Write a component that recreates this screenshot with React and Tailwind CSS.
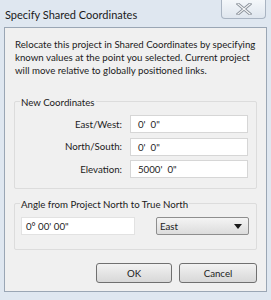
import React from "react";

export default function App() {
  const font = { fontFamily: 'Lato, "Open Sans", sans-serif' };
  return (
    <div
      className="w-[271px] h-[300px] bg-[#dfe7f0] relative overflow-hidden text-[#1b1b1b]"
      style={font}
    >
      {/* title bar */}
      <div className="h-[27px] flex items-start pl-[5px] pt-[8px] text-[11px] leading-[14px] text-[#1a1a1a]">
        Specify Shared Coordinates
      </div>
      <div className="absolute top-0 right-[5px] w-[45px] h-[19px] rounded-b-[4px] border border-t-0 border-[#a9b4c2] bg-gradient-to-b from-[#f4f7fa] to-[#dfe6ee] flex items-center justify-center">
        <svg width="16" height="12" viewBox="0 0 16 12">
          <path d="M2 1 L14 11 M14 1 L2 11" stroke="#8b929b" strokeWidth="3" strokeLinecap="square" />
          <path d="M2 1 L14 11 M14 1 L2 11" stroke="#f5f6f7" strokeWidth="1.2" strokeLinecap="square" />
        </svg>
      </div>

      {/* panel */}
      <div className="mx-[4px] h-[265px] border border-[#9aa6b4] bg-[#f0f0f0] px-[9px] pt-[10px] flex flex-col text-[9.7px]">
        <p className="leading-[13px] pl-[1px]">
          Relocate this project in Shared Coordinates by specifying known values at the point you selected. Current project will move relative to globally positioned links.
        </p>

        {/* New Coordinates */}
        <div className="mt-[19px] leading-[13px] ml-[6px] px-[1px] w-fit bg-[#f0f0f0] relative z-10">New Coordinates</div>
        <div className="mt-[-8px] border border-[#dcdcdc] rounded-[2px] h-[88px] pt-[13px] flex flex-col gap-[4.5px]">
          {[
            ["East/West:", "0'  0\""],
            ["North/South:", "0'  0\""],
            ["Elevation:", "5000'  0\""],
          ].map(([l, v]) => (
            <div key={l} className="flex items-center">
              <div className="w-[115px] text-right pr-[8px]">{l}</div>
              <div className="w-[118px] h-[18px] bg-white border border-[#d6d6d6] leading-[16px] pl-[7px] whitespace-pre">
                {v}
              </div>
            </div>
          ))}
        </div>

        {/* Angle */}
        <div className="mt-[9px] leading-[13px] ml-[6px] px-[1px] w-fit bg-[#f0f0f0] relative z-10">Angle from Project North to True North</div>
        <div className="mt-[-8px] border border-[#dcdcdc] rounded-[2px] h-[47px] pt-[13px] pl-[6px] flex items-start">
          <div className="w-[114px] h-[18px] bg-white border border-[#e2e2e2] leading-[16px] pl-[4px]">
            0° 00' 00"
          </div>
          <div className="ml-[21px] w-[93px] h-[18px] rounded-[2px] border border-[#8e8e8e] bg-gradient-to-b from-[#f4f4f4] to-[#dcdcdc] flex items-center justify-between pl-[3px] pr-[6px]">
            <span>East</span>
            <svg width="8" height="5" viewBox="0 0 8 5">
              <path d="M0 0 L8 0 L4 5 Z" fill="#1a1a1a" />
            </svg>
          </div>
        </div>

        {/* buttons */}
        <div className="mt-[13px] flex justify-end gap-[7px]">
          <div className="w-[76px] h-[20px] rounded-[3px] border border-[#707070] bg-gradient-to-b from-[#f2f2f2] to-[#d8d8d8] flex items-center justify-center">
            OK
          </div>
          <div className="w-[78px] h-[20px] rounded-[3px] border border-[#707070] bg-gradient-to-b from-[#f2f2f2] to-[#d8d8d8] flex items-center justify-center">
            Cancel
          </div>
        </div>
      </div>
    </div>
  );
}
